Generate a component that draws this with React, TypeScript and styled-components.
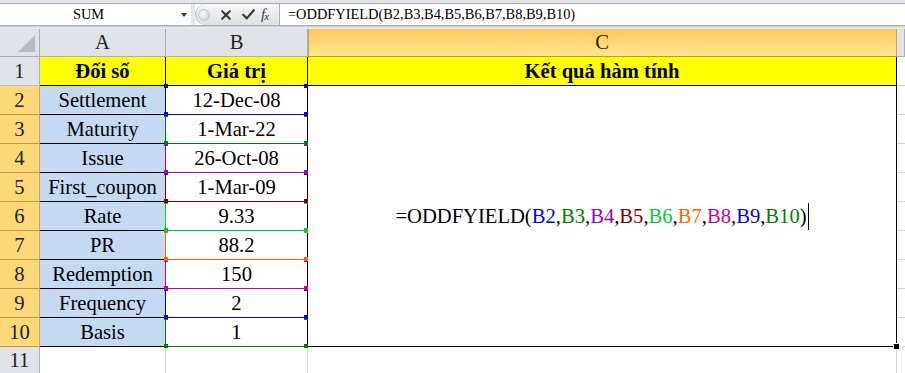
import React from "react";
import styled, { createGlobalStyle, css } from "styled-components";

const SERIF = `"Liberation Serif", "Times New Roman", serif`;

const GlobalStyle = createGlobalStyle`
  html, body { margin: 0; padding: 0; background: #fff; }
  body { font-family: ${SERIF}; color: #000; }
  *, *::before, *::after { box-sizing: border-box; }
`;

const Window = styled.div`
  width: 905px;
  height: 373px;
  overflow: hidden;
  display: flex;
  flex-direction: column;
  background: #fff;
  font-family: ${SERIF};
`;

/* ---------- formula bar ---------- */
const Bar = styled.div`
  flex: none;
  height: 29px;
  background: #e3e6ea;
  padding-top: 3px;
`;

const BarInner = styled.div`
  height: 23px;
  display: flex;
  background: #fff;
  border-top: 1px solid #a9aeb4;
  border-bottom: 1px solid #a9aeb4;
  box-shadow: 0 1px 0 #cdd1d6;
`;

const NameBox = styled.div`
  width: 191px;
  display: grid;
  grid-template-columns: 1fr 14px;
  align-items: center;
  font-size: 14.4px;
`;

const NameText = styled.span`
  text-align: center;
`;

const Arrow = styled.span`
  justify-self: center;
  width: 0;
  height: 0;
  border-left: 3.5px solid transparent;
  border-right: 3.5px solid transparent;
  border-top: 4px solid #3f3f3f;
`;

const Gap = styled.div`
  width: 4px;
  background: #e3e6ea;
`;

const Pill = styled.div`
  width: 85px;
  display: flex;
  align-items: center;
  background: linear-gradient(#f7f7f7, #dedfe1);
  border-left: 1px solid #b3b7bc;
  border-right: 1px solid #a9aeb4;
  border-radius: 11px 0 0 11px;
`;

const Knob = styled.span`
  width: 12px;
  height: 12px;
  margin-left: 2px;
  border-radius: 50%;
  border: 1px solid #c4c6c9;
  background: radial-gradient(circle at 40% 35%, #ffffff 0%, #e4e5e7 45%, #c9cbce 100%);
`;

const IconSlot = styled.span<{ $ml: number }>`
  display: flex;
  align-items: center;
  margin-left: ${(p) => p.$ml}px;
`;

const Fx = styled.span`
  font-family: ${SERIF};
  font-style: italic;
  font-size: 15px;
  color: #3c3c3c;
  letter-spacing: -1px;
  line-height: 1;
  & > small {
    font-size: 11px;
    vertical-align: -1px;
  }
`;

const FormulaInput = styled.div`
  flex: 1;
  display: flex;
  align-items: center;
  padding-left: 8px;
  font-size: 14.4px;
  white-space: nowrap;
`;

/* ---------- sheet ---------- */
const Sheet = styled.div`
  flex: 1;
  display: grid;
  grid-template-columns: 40px 126px 142px 589px 1fr;
  grid-template-rows: 28px repeat(10, 29px) 1fr;
  font-family: ${SERIF};
  font-size: 20.6px;
`;

const centered = css`
  display: flex;
  align-items: center;
  justify-content: center;
  white-space: nowrap;
`;

const Corner = styled.div`
  position: relative;
  background: #dfe3e8;
  border-right: 1px solid #aab0b7;
  border-bottom: 1px solid #aab0b7;
  &::after {
    content: "";
    position: absolute;
    right: 4px;
    bottom: 4px;
    width: 0;
    height: 0;
    border-left: 17px solid transparent;
    border-bottom: 17px solid #b7bcc2;
  }
`;

const ColHeader = styled.div<{ $active?: boolean }>`
  ${centered};
  color: #222;
  background: #dfe3e8;
  border-right: 1px solid #aab0b7;
  border-bottom: 1px solid #aab0b7;
  ${(p) =>
    p.$active &&
    css`
      background: linear-gradient(#ffc75c, #ffe58d);
      border-right-color: #d6a044;
      border-bottom-color: #c99038;
      box-shadow: inset 1px 0 0 #c9a15a;
    `}
`;

const RowHeader = styled.div<{ $active?: boolean; $last?: boolean }>`
  ${centered};
  color: #222;
  background: #dfe3e8;
  border-right: 1px solid #aab0b7;
  border-bottom: ${(p) => (p.$last ? "none" : "1px solid #b9bec4")};
  ${(p) =>
    p.$active &&
    css`
      background: #fdd878;
      border-right-color: #d0a24c;
      border-bottom-color: #c79a45;
    `}
`;

const TitleCell = styled.div<{ $blueBottom?: boolean }>`
  ${centered};
  font-weight: bold;
  background: #ffff00;
  border-right: 1px solid #000;
  border-bottom: 1px solid ${(p) => (p.$blueBottom ? "#0000ff" : "#000")};
`;

const LabelCell = styled.div`
  ${centered};
  background: #c5d9f1;
  border-right: 1px solid #000;
  border-bottom: 1px solid #000;
`;

const ValueCell = styled.div`
  ${centered};
  position: relative;
  background: #fff;
  border-right: 1px solid #000;
  border-bottom: 1px solid #000;
`;

const RefBox = styled.div<{ $color: string; $z: number }>`
  position: absolute;
  top: -1px;
  left: -1px;
  right: 0;
  bottom: -1px;
  border: 1px solid ${(p) => p.$color};
  border-right: none;
  z-index: ${(p) => p.$z};
  pointer-events: none;
`;

const Handle = styled.span<{ $color: string; $v: "top" | "bottom"; $h: "left" | "right" }>`
  position: absolute;
  width: 4px;
  height: 4px;
  background: ${(p) => p.$color};
  ${(p) => p.$v}: -2px;
  ${(p) => (p.$h === "left" ? "left: -2px;" : "right: -1px;")}
`;

const ResultCell = styled.div`
  ${centered};
  position: relative;
  grid-column: 4;
  grid-row: span 9;
  background: #fff;
  border-right: 1px solid #000;
  border-bottom: 1px solid #000;
`;

const Formula = styled.span`
  display: inline-flex;
  align-items: center;
`;

const Ref = styled.span<{ $color: string }>`
  color: ${(p) => p.$color};
`;

const Caret = styled.span`
  display: inline-block;
  width: 1px;
  height: 27px;
  margin-left: 1px;
  background: #000;
`;

const FillHandle = styled.span`
  position: absolute;
  right: -3px;
  bottom: -3px;
  width: 5px;
  height: 5px;
  background: #000;
  outline: 1px solid #fff;
  z-index: 30;
`;

const BlankCell = styled.div<{ $last?: boolean; $noRight?: boolean }>`
  background: #fff;
  border-right: ${(p) => (p.$noRight ? "none" : "1px solid #d4d4d4")};
  border-bottom: ${(p) => (p.$last ? "none" : "1px solid #d4d4d4")};
`;

const rows = [
  { label: "Settlement", value: "12-Dec-08", color: "#0000ff", ref: "B2" },
  { label: "Maturity", value: "1-Mar-22", color: "#008000", ref: "B3" },
  { label: "Issue", value: "26-Oct-08", color: "#9900cc", ref: "B4" },
  { label: "First_coupon", value: "1-Mar-09", color: "#800000", ref: "B5" },
  { label: "Rate", value: "9.33", color: "#00cc33", ref: "B6" },
  { label: "PR", value: "88.2", color: "#ff6600", ref: "B7" },
  { label: "Redemption", value: "150", color: "#cc0099", ref: "B8" },
  { label: "Frequency", value: "2", color: "#0000ff", ref: "B9" },
  { label: "Basis", value: "1", color: "#008000", ref: "B10" },
];

const Handles: React.FC<{ color: string }> = ({ color }) => (
  <>
    <Handle $color={color} $v="top" $h="left" />
    <Handle $color={color} $v="top" $h="right" />
    <Handle $color={color} $v="bottom" $h="left" />
    <Handle $color={color} $v="bottom" $h="right" />
  </>
);

export default function App() {
  return (
    <>
      <GlobalStyle />
      <Window>
        <Bar>
          <BarInner>
            <NameBox>
              <NameText>SUM</NameText>
              <Arrow />
            </NameBox>
            <Gap />
            <Pill>
              <Knob />
              <IconSlot $ml={11}>
                <svg width="10" height="10" viewBox="0 0 10 10">
                  <path d="M1.2 1.2 L8.8 8.8 M8.8 1.2 L1.2 8.8" stroke="#3a3a3a" strokeWidth="2" strokeLinecap="round" fill="none" />
                </svg>
              </IconSlot>
              <IconSlot $ml={11}>
                <svg width="13" height="11" viewBox="0 0 13 11">
                  <path d="M1.2 5.8 L4.8 9.4 L11.8 1.2" stroke="#3a3a3a" strokeWidth="2.2" strokeLinecap="round" strokeLinejoin="round" fill="none" />
                </svg>
              </IconSlot>
              <IconSlot $ml={6}>
                <Fx>
                  f<small>x</small>
                </Fx>
              </IconSlot>
            </Pill>
            <FormulaInput>=ODDFYIELD(B2,B3,B4,B5,B6,B7,B8,B9,B10)</FormulaInput>
          </BarInner>
        </Bar>

        <Sheet>
          <Corner />
          <ColHeader>A</ColHeader>
          <ColHeader>B</ColHeader>
          <ColHeader $active>C</ColHeader>
          <ColHeader />

          <RowHeader>1</RowHeader>
          <TitleCell>Đối số</TitleCell>
          <TitleCell>Giá trị</TitleCell>
          <TitleCell $blueBottom>Kết quả hàm tính</TitleCell>
          <BlankCell $noRight />

          {rows.map((r, i) => (
            <React.Fragment key={r.ref}>
              <RowHeader $active>{i + 2}</RowHeader>
              <LabelCell>{r.label}</LabelCell>
              <ValueCell>
                {r.value}
                <RefBox $color={r.color} $z={20 - i}>
                  <Handles color={r.color} />
                </RefBox>
              </ValueCell>
              {i === 0 && (
                <ResultCell>
                  <Formula>
                    =ODDFYIELD(
                    {rows.map((x, j) => (
                      <React.Fragment key={x.ref}>
                        <Ref $color={x.color}>{x.ref}</Ref>
                        {j < rows.length - 1 ? "," : ""}
                      </React.Fragment>
                    ))}
                    )
                    <Caret />
                  </Formula>
                  <FillHandle />
                </ResultCell>
              )}
              <BlankCell $noRight />
            </React.Fragment>
          ))}

          <RowHeader $last>11</RowHeader>
          <BlankCell $last />
          <BlankCell $last />
          <BlankCell $last />
          <BlankCell $last $noRight />
        </Sheet>
      </Window>
    </>
  );
}
